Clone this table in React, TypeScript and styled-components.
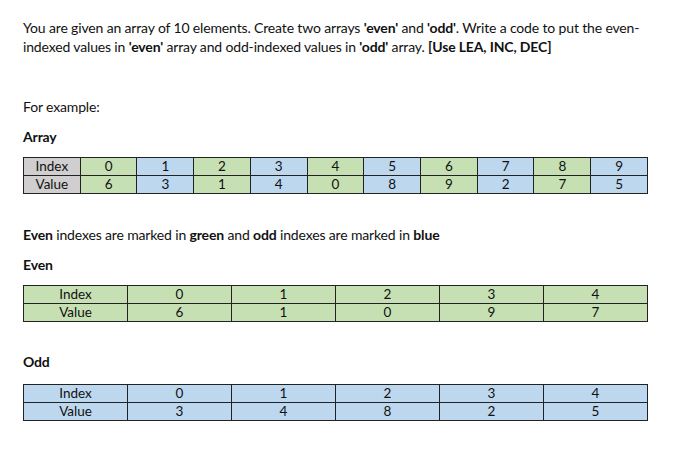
import React from 'react';
import styled, { createGlobalStyle } from 'styled-components';

const GREEN = '#c6e0b4';
const BLUE = '#bdd7ee';
const GRAY = '#d0cece';

const GlobalStyle = createGlobalStyle`
    body {
        margin: 0;
        background: #fff;
        color: #111;
        font-family: Lato, 'Liberation Sans', sans-serif;
    }
`;

const Page = styled.div`
    padding: 0 29px 0 23px;
    width: 676px;
    box-sizing: border-box;
`;

const Text = styled.p<{ $top: number }>`
    margin: ${p => p.$top}px 0 0;
    font-size: 14px;
    line-height: 19px;
    letter-spacing: -0.15px;
    white-space: nowrap;
`;

const Heading = styled(Text)`
    font-weight: 700;
`;

const Grid = styled.table<{ $top: number }>`
    margin-top: ${p => p.$top}px;
    width: 625px;
    border-collapse: collapse;
    table-layout: fixed;
`;

const Cell = styled.td<{ $bg: string }>`
    border: 1px solid #222;
    background: ${p => p.$bg};
    height: 17px;
    padding: 0;
    text-align: center;
    font-size: 13.5px;
    line-height: 17px;
`;

type Row = { label: string; values: number[] };

const ArrayTable = ({ top, rows, colour }: { top: number; rows: Row[]; colour: (i: number) => string }) => (
    <Grid $top={top}>
        <tbody>
            {rows.map(r => (
                <tr key={r.label}>
                    <Cell $bg={colour(-1)}>{r.label}</Cell>
                    {r.values.map((v, i) => (
                        <Cell key={i} $bg={colour(i)}>{v}</Cell>
                    ))}
                </tr>
            ))}
        </tbody>
    </Grid>
);

const values = [6, 3, 1, 4, 0, 8, 9, 2, 7, 5];

export default function App() {
    return (
        <Page>
            <GlobalStyle />
            <Text $top={18}>
                You are given an array of 10 elements. Create two arrays <b>'even'</b> and <b>'odd'</b>. Write a code to put the even-
                <br />
                indexed values in <b>'even'</b> array and odd-indexed values in <b>'odd'</b> array. <b>[Use LEA, INC, DEC]</b>
            </Text>
            <Text $top={41}>For example:</Text>
            <Heading $top={11}>Array</Heading>
            <ArrayTable
                top={11}
                rows={[
                    { label: 'Index', values: values.map((_, i) => i) },
                    { label: 'Value', values },
                ]}
                colour={i => (i < 0 ? GRAY : i % 2 === 0 ? GREEN : BLUE)}
            />
            <Text $top={31}>
                <b>Even</b> indexes are marked in <b>green</b> and <b>odd</b> indexes are marked in <b>blue</b>
            </Text>
            <Heading $top={11}>Even</Heading>
            <ArrayTable
                top={11}
                rows={[
                    { label: 'Index', values: [0, 1, 2, 3, 4] },
                    { label: 'Value', values: values.filter((_, i) => i % 2 === 0) },
                ]}
                colour={() => GREEN}
            />
            <Heading $top={30}>Odd</Heading>
            <ArrayTable
                top={13}
                rows={[
                    { label: 'Index', values: [0, 1, 2, 3, 4] },
                    { label: 'Value', values: values.filter((_, i) => i % 2 === 1) },
                ]}
                colour={() => BLUE}
            />
        </Page>
    );
}
